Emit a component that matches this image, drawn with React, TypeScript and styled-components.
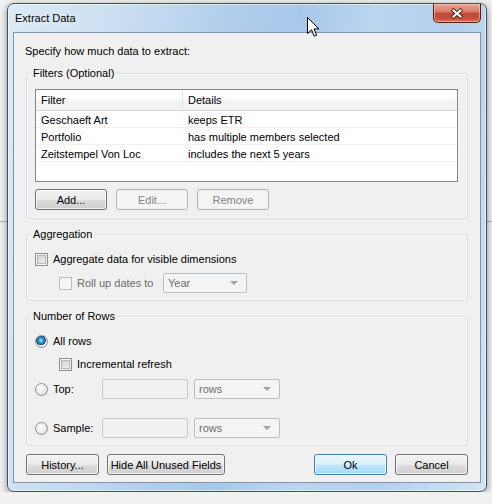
import React from 'react';
import styled, { createGlobalStyle } from 'styled-components';

const GlobalStyle = createGlobalStyle`
  html, body {
    margin: 0;
    padding: 0;
  }
  body {
    background:
      linear-gradient(to bottom, transparent 221px, #b4b4b4 221px, #b4b4b4 222px, transparent 222px),
      #f1f1f1;
    font-family: "Liberation Sans", Arial, sans-serif;
    font-size: 11px;
    color: #000;
  }
`;

const Page = styled.div`
  padding: 3px 0 0 7px;
`;

const Window = styled.div`
  position: relative;
  box-sizing: border-box;
  width: 480px;
  padding: 0 5px 8px 5px;
  border: 1px solid #3e5169;
  border-radius: 7px;
  background: linear-gradient(100deg, #dce9f6 0%, #c9ddf1 22%, #b3cfec 38%, #a8c8ea 52%, #bcd5ef 66%, #b2cfec 80%, #d3e4f5 100%);
  box-shadow: inset 0 0 0 1px rgba(255, 255, 255, 0.55), 0 2px 7px rgba(0, 0, 0, 0.45);
`;

const TitleBar = styled.div`
  display: flex;
  justify-content: space-between;
  align-items: flex-start;
  height: 28px;
  padding-left: 2px;
`;

const Title = styled.div`
  align-self: center;
  line-height: 15px;
  color: #000;
  text-shadow: 0 0 6px rgba(255, 255, 255, 0.9);
`;

const CloseButton = styled.div`
  display: flex;
  align-items: center;
  justify-content: center;
  box-sizing: border-box;
  width: 48px;
  height: 19px;
  border: 1px solid #5c1a12;
  border-top: none;
  border-radius: 0 0 5px 5px;
  background: linear-gradient(to bottom, #e8a898 0%, #d47a68 45%, #c04a36 50%, #c5503a 80%, #d7765c 100%);
  box-shadow: inset 0 0 0 1px rgba(255, 220, 210, 0.5);
`;

const Cursor = styled.svg`
  position: absolute;
  left: 299px;
  top: 13px;
`;

const Client = styled.div`
  display: flex;
  flex-direction: column;
  border: 1px solid #7f93ad;
  background: #f0f0f0;
  padding: 11px 12px 7px 12px;
`;

const Prompt = styled.div`
  line-height: 15px;
  margin-left: -1px;
`;

const Group = styled.fieldset<{ $top: number; $bottom?: number }>`
  margin: ${({ $top }) => $top}px 0 0 0;
  min-width: 0;
  padding: 8px 9px ${({ $bottom }) => $bottom ?? 8}px 8px;
  border: 1px solid #d5dfe5;
  border-radius: 3px;
  box-shadow: inset 0 0 0 1px #fafbfb;
`;

const Legend = styled.legend`
  padding: 0 2px;
  margin-left: -4px;
  line-height: 15px;
`;

const List = styled.div`
  box-sizing: border-box;
  height: 93px;
  border: 1px solid #828790;
  background: #fff;
`;

const ListRow = styled.div<{ $header?: boolean }>`
  display: grid;
  grid-template-columns: 147px 1fr;
  box-sizing: border-box;
  height: ${({ $header }) => ($header ? 21 : 17)}px;
  padding-top: ${({ $header }) => ($header ? 0 : 1)}px;
  border-bottom: 1px solid ${({ $header }) => ($header ? '#d5d5d5' : '#f0f0f0')};
  background: ${({ $header }) => ($header ? 'linear-gradient(to bottom, #ffffff 0%, #ffffff 45%, #f1f2f4 55%, #f1f2f4 100%)' : '#fff')};
`;

const Cell = styled.div<{ $header?: boolean }>`
  display: flex;
  align-items: center;
  padding-left: 5px;
  white-space: nowrap;
  border-right: 1px solid ${({ $header }) => ($header ? '#e3e5e8' : 'transparent')};
  &:last-child {
    border-right: none;
  }
`;

const ButtonRow = styled.div<{ $top: number }>`
  display: flex;
  gap: 9px;
  margin-top: ${({ $top }) => $top}px;
`;

const Footer = styled.div`
  display: flex;
  justify-content: space-between;
  margin-top: 8px;
`;

const FooterSide = styled.div`
  display: flex;
  gap: 8px;
`;

type ButtonKind = 'normal' | 'disabled' | 'default';

const Button = styled.div<{ $kind?: ButtonKind; $width: number }>`
  display: flex;
  align-items: center;
  justify-content: center;
  box-sizing: border-box;
  width: ${({ $width }) => $width}px;
  height: 21px;
  border-radius: 3px;
  border: 1px solid ${({ $kind }) => ($kind === 'disabled' ? '#adb2b5' : $kind === 'default' ? '#3c7fb1' : '#707070')};
  color: ${({ $kind }) => ($kind === 'disabled' ? '#838383' : '#000')};
  background: ${({ $kind }) =>
    $kind === 'disabled'
      ? '#f4f4f4'
      : $kind === 'default'
      ? 'linear-gradient(to bottom, #eaf6fd 0%, #d9f0fc 50%, #bee6fd 51%, #a7d9f5 100%)'
      : 'linear-gradient(to bottom, #f2f2f2 0%, #ebebeb 50%, #dddddd 51%, #cfcfcf 100%)'};
  box-shadow: ${({ $kind }) => ($kind === 'disabled' ? 'none' : 'inset 0 0 0 1px rgba(255,255,255,0.75)')};
`;

const OptionRow = styled.div<{ $indent?: number; $top?: number; $height?: number }>`
  display: flex;
  align-items: center;
  height: ${({ $height }) => $height ?? 17}px;
  margin-top: ${({ $top }) => $top ?? 0}px;
  padding-left: ${({ $indent }) => $indent ?? 0}px;
`;

const CheckBox = styled.div<{ $disabled?: boolean }>`
  box-sizing: border-box;
  flex: none;
  width: 13px;
  height: 13px;
  margin-right: 5px;
  border: 1px solid ${({ $disabled }) => ($disabled ? '#bcbcbc' : '#8e8f8f')};
  background: ${({ $disabled }) => ($disabled ? '#f4f4f4' : 'linear-gradient(135deg, #c4c8cd 0%, #dfe1e4 50%, #f6f6f6 100%)')};
  box-shadow: ${({ $disabled }) =>
    $disabled ? 'inset 0 0 0 1px #f7f7f7' : 'inset 0 0 0 1px #f4f4f4, inset 0 0 0 2px #b4b8bd'};
`;

const Radio = styled.div<{ $checked?: boolean }>`
  box-sizing: border-box;
  flex: none;
  width: 13px;
  height: 13px;
  margin-right: 5px;
  border-radius: 50%;
  border: 1px solid #8e8f8f;
  background: ${({ $checked }) =>
    $checked
      ? 'radial-gradient(circle at 45% 40%, #9fe3fb 0%, #3aa0d8 25%, #1b5d96 45%, #1d4f7c 52%, #f2f2f2 56%, #dcdcdc 100%)'
      : 'radial-gradient(circle at 40% 35%, #ffffff 0%, #eeeeee 45%, #d0d2d4 100%)'};
`;

const Label = styled.span<{ $disabled?: boolean; $width?: number }>`
  line-height: 15px;
  white-space: nowrap;
  color: ${({ $disabled }) => ($disabled ? '#6d6d6d' : '#000')};
  ${({ $width }) => ($width ? `width: ${$width}px; flex: none;` : '')}
`;

const Combo = styled.div<{ $width: number }>`
  display: flex;
  align-items: center;
  justify-content: space-between;
  box-sizing: border-box;
  width: ${({ $width }) => $width}px;
  height: 20px;
  padding: 0 8px 0 4px;
  border: 1px solid #b9bec2;
  border-radius: 2px;
  background: #f4f4f4;
  color: #6d6d6d;
`;

const Arrow = styled.span`
  width: 0;
  height: 0;
  border-left: 4px solid transparent;
  border-right: 4px solid transparent;
  border-top: 4px solid #a2a2a2;
`;

const TextBox = styled.div<{ $width: number }>`
  box-sizing: border-box;
  width: ${({ $width }) => $width}px;
  height: 20px;
  margin-right: 6px;
  border: 1px solid #c5c9cd;
  border-radius: 2px;
  background: #f1f1f1;
`;

const filters = [
  { name: 'Geschaeft Art', details: 'keeps ETR' },
  { name: 'Portfolio', details: 'has multiple members selected' },
  { name: 'Zeitstempel Von Loc', details: 'includes the next 5 years' },
];

export default function App() {
  return (
    <Page>
      <GlobalStyle />
      <Window>
        <TitleBar>
          <Title>Extract Data</Title>
          <CloseButton>
            <svg width="14" height="11" viewBox="0 0 14 11">
              <path d="M3.5 2.5 L10.5 8.5 M10.5 2.5 L3.5 8.5" stroke="#4a1c14" strokeWidth="3.8" strokeLinecap="square" />
              <path d="M3.5 2.5 L10.5 8.5 M10.5 2.5 L3.5 8.5" stroke="#ffffff" strokeWidth="2.1" strokeLinecap="square" />
            </svg>
          </CloseButton>
        </TitleBar>
        <Cursor width="13" height="21" viewBox="0 0 13 21">
          <path d="M0.5 0.5 L0.5 16.5 L4.5 12.8 L7.2 19.2 L9.6 18.2 L7 11.9 L12 11.9 Z" fill="#fff" stroke="#000" strokeWidth="1" strokeLinejoin="miter" />
        </Cursor>
        <Client>
          <Prompt>Specify how much data to extract:</Prompt>

          <Group $top={7}>
            <Legend>Filters (Optional)</Legend>
            <List>
              <ListRow $header>
                <Cell $header>Filter</Cell>
                <Cell $header>Details</Cell>
              </ListRow>
              {filters.map((f) => (
                <ListRow key={f.name}>
                  <Cell>{f.name}</Cell>
                  <Cell>{f.details}</Cell>
                </ListRow>
              ))}
            </List>
            <ButtonRow $top={7}>
              <Button $width={72}>Add...</Button>
              <Button $width={72} $kind="disabled">Edit...</Button>
              <Button $width={72} $kind="disabled">Remove</Button>
            </ButtonRow>
          </Group>

          <Group $top={8} $bottom={7}>
            <Legend>Aggregation</Legend>
            <OptionRow $top={1}>
              <CheckBox />
              <Label>Aggregate data for visible dimensions</Label>
            </OptionRow>
            <OptionRow $indent={24} $top={5} $height={20}>
              <CheckBox $disabled />
              <Label $disabled $width={86}>Roll up dates to</Label>
              <Combo $width={84}>
                <span>Year</span>
                <Arrow />
              </Combo>
            </OptionRow>
          </Group>

          <Group $top={8} $bottom={7}>
            <Legend>Number of Rows</Legend>
            <OptionRow $top={1}>
              <Radio $checked />
              <Label>All rows</Label>
            </OptionRow>
            <OptionRow $indent={24} $top={6}>
              <CheckBox />
              <Label>Incremental refresh</Label>
            </OptionRow>
            <OptionRow $top={6} $height={20}>
              <Radio />
              <Label $width={49}>Top:</Label>
              <TextBox $width={86} />
              <Combo $width={86}>
                <span>rows</span>
                <Arrow />
              </Combo>
            </OptionRow>
            <OptionRow $top={19} $height={20}>
              <Radio />
              <Label $width={49}>Sample:</Label>
              <TextBox $width={86} />
              <Combo $width={86}>
                <span>rows</span>
                <Arrow />
              </Combo>
            </OptionRow>
          </Group>

          <Footer>
            <FooterSide>
              <Button $width={73}>History...</Button>
              <Button $width={118}>Hide All Unused Fields</Button>
            </FooterSide>
            <FooterSide>
              <Button $width={73} $kind="default">Ok</Button>
              <Button $width={73}>Cancel</Button>
            </FooterSide>
          </Footer>
        </Client>
      </Window>
    </Page>
  );
}
